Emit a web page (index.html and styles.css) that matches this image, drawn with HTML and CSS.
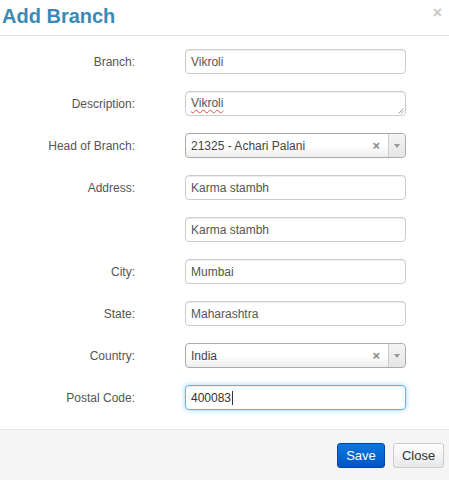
FILE: index.html
```html
<!DOCTYPE html>
<html>
<head>
<meta charset="utf-8">
<link rel="stylesheet" href="styles.css">
</head>
<body>
<div class="modal">
  <div class="header">
    <h1 class="title">Add Branch</h1>
    <span class="close-x">×</span>
  </div>
  <div class="body">
    <div class="row"><label class="lbl">Branch:</label><div class="field"><div class="input">Vikroli</div></div></div>
    <div class="row"><label class="lbl">Description:</label><div class="field"><div class="input textarea"><span class="spell">Vikroli</span><svg class="grip" width="7" height="7" viewBox="0 0 7 7"><path d="M6.5 1.5 L1.5 6.5 M6.5 4 L4 6.5" stroke="#888" stroke-width="0.8"/></svg></div></div></div>
    <div class="row"><label class="lbl">Head of Branch:</label><div class="field"><div class="select"><span class="sel-text">21325 - Achari Palani</span><span class="sel-clear">×</span><span class="sel-arrow"><svg width="6" height="4" viewBox="0 0 6 4"><path d="M0 0 L6 0 L3 4 Z" fill="#999"/></svg></span></div></div></div>
    <div class="row"><label class="lbl">Address:</label><div class="field"><div class="input">Karma stambh</div></div></div>
    <div class="row"><label class="lbl"></label><div class="field"><div class="input">Karma stambh</div></div></div>
    <div class="row"><label class="lbl">City:</label><div class="field"><div class="input">Mumbai</div></div></div>
    <div class="row"><label class="lbl">State:</label><div class="field"><div class="input">Maharashtra</div></div></div>
    <div class="row"><label class="lbl">Country:</label><div class="field"><div class="select"><span class="sel-text">India</span><span class="sel-clear">×</span><span class="sel-arrow"><svg width="6" height="4" viewBox="0 0 6 4"><path d="M0 0 L6 0 L3 4 Z" fill="#999"/></svg></span></div></div></div>
    <div class="row"><label class="lbl">Postal Code:</label><div class="field"><div class="input focus">400083<span class="caret"></span></div></div></div>
  </div>
  <div class="footer">
    <button class="btn btn-primary">Save</button>
    <button class="btn btn-default">Close</button>
  </div>
</div>
</body>
</html>
```
FILE: styles.css
```css
html, body {
  margin: 0;
  padding: 0;
  background: #fff;
  font-family: "Liberation Sans", Arial, sans-serif;
}
.modal {
  width: 449px;
  height: 480px;
  display: flex;
  flex-direction: column;
  overflow: hidden;
}
.header {
  height: 36px;
  border-bottom: 1px solid #e5e5e5;
  display: flex;
  align-items: flex-start;
  justify-content: space-between;
  box-sizing: border-box;
}
.title {
  margin: 0;
  padding: 4px 0 0 2px;
  font-size: 20px;
  font-weight: bold;
  color: #3a8ab5;
  line-height: 24px;
}
.close-x {
  font-size: 16px;
  color: #c8c8c8;
  font-weight: bold;
  margin: 5px 7px 0 0;
  line-height: 16px;
}
.body {
  flex: 1;
  padding-top: 13px;
  display: flex;
  flex-direction: column;
  gap: 17px;
}
.row {
  display: flex;
  align-items: center;
  height: 25px;
}
.lbl {
  width: 135px;
  text-align: right;
  font-size: 12px;
  color: #555;
  flex: none;
}
.field {
  margin-left: 50px;
  width: 221px;
}
.input {
  box-sizing: border-box;
  height: 25px;
  border: 1px solid #ccc;
  border-radius: 4px;
  box-shadow: inset 0 1px 1px rgba(0,0,0,0.075);
  font-size: 12px;
  color: #555;
  padding: 0 5px;
  display: flex;
  align-items: center;
  position: relative;
}
.textarea {
  height: 25px;
  align-items: flex-start;
  padding-top: 4px;
}
.spell {
  text-decoration: underline wavy #e05050;
  text-decoration-thickness: 1px;
  text-underline-offset: 2px;
}
.grip {
  position: absolute;
  right: 1px;
  bottom: 1px;
}
.focus {
  border-color: #66afe9;
  box-shadow: inset 0 1px 1px rgba(0,0,0,0.075), 0 0 5px rgba(102,175,233,0.6);
  color: #333;
}
.caret {
  display: inline-block;
  width: 1px;
  height: 14px;
  background: #333;
  margin-left: 1px;
}
.select {
  box-sizing: border-box;
  height: 25px;
  border: 1px solid #aaa;
  border-radius: 4px;
  background: linear-gradient(#fff 0%, #fff 50%, #eee 100%);
  display: flex;
  align-items: center;
  font-size: 12px;
  color: #444;
}
.sel-text {
  flex: 1;
  padding-left: 5px;
}
.sel-clear {
  font-size: 13px;
  font-weight: bold;
  color: #888;
  margin-right: 8px;
}
.sel-arrow {
  width: 16px;
  height: 100%;
  border-left: 1px solid #ccc;
  display: flex;
  align-items: center;
  justify-content: center;
  background: linear-gradient(#f4f4f4, #e6e6e6);
  border-radius: 0 4px 4px 0;
}
.footer {
  height: 51px;
  flex: none;
  background: #f5f5f5;
  border-top: 1px solid #e5e5e5;
  box-sizing: border-box;
  display: flex;
  justify-content: flex-end;
  align-items: flex-start;
  padding: 13px 5px 0 0;
  gap: 8px;
}
.btn {
  height: 25px;
  border-radius: 3px;
  font-family: "Liberation Sans", Arial, sans-serif;
  font-size: 13px;
  padding: 0;
  cursor: pointer;
}
.btn-primary {
  width: 48px;
  background: linear-gradient(#0a78e0, #0055c2);
  border: 1px solid #0048a8;
  color: #fff;
}
.btn-default {
  width: 51px;
  background: linear-gradient(#fff, #e8e8e8);
  border: 1px solid #ccc;
  color: #333;
}
```
